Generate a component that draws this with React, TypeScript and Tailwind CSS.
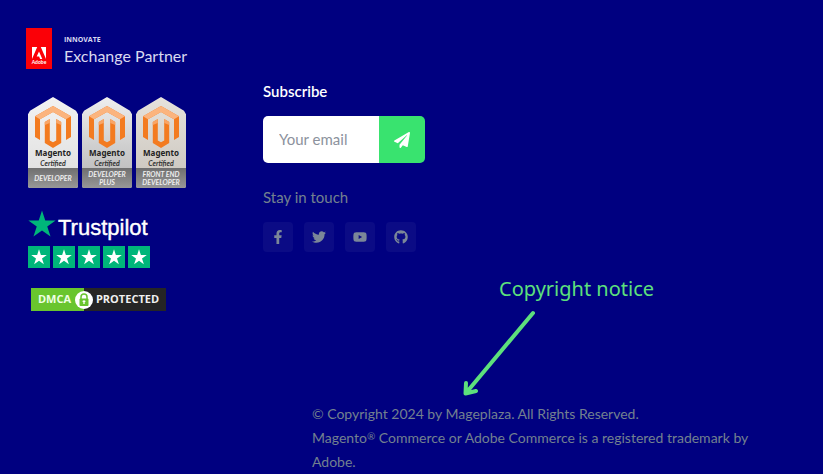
import { FaFacebookF, FaGithub, FaPaperPlane, FaTwitter, FaYoutube } from "react-icons/fa";

const certifications = [
  { lines: ["DEVELOPER"], plate: "bg-linear-to-b from-[#f2f2f2] to-[#dedede]" },
  { lines: ["DEVELOPER", "PLUS"], plate: "bg-linear-to-b from-[#eeeeee] to-[#b5b5b5]" },
  { lines: ["FRONT END", "DEVELOPER"], plate: "bg-linear-to-b from-[#e6e2dc] to-[#c9c4bc]" },
];

const socials = [
  { label: "Facebook", Icon: FaFacebookF },
  { label: "Twitter", Icon: FaTwitter },
  { label: "YouTube", Icon: FaYoutube },
  { label: "GitHub", Icon: FaGithub },
];

function Star({ className }: { className: string }) {
  return (
    <svg viewBox="0 0 24 24" className={className} aria-hidden="true">
      <path d="M12 0.5 14.8 9H23.7L16.5 14.2 19.3 22.8 12 17.5 4.7 22.8 7.5 14.2 0.3 9H9.2Z" fill="currentColor" />
    </svg>
  );
}

function AdobePartner() {
  return (
    <div className="flex items-start gap-3">
      <div className="flex h-[41px] w-[26px] flex-col items-center justify-end bg-[#fb0007] pb-1">
        <svg viewBox="0 0 14 12" className="h-3 w-3.5" aria-hidden="true">
          <path d="M0 0H5.2L0 12ZM8.8 0H14V12ZM7 4.4 10.3 12H8.1L7.1 9.6H4.7Z" fill="#fff" />
        </svg>
        <span className="text-[5px] leading-[6px] font-bold text-white">Adobe</span>
      </div>
      <div className="pt-2 text-[#d9d9f0]">
        <p className="font-['Open_Sans',sans-serif] text-[7px] leading-2 font-bold">INNOVATE</p>
        <p className="text-base leading-6 whitespace-nowrap">Exchange Partner</p>
      </div>
    </div>
  );
}

function MagentoLogo() {
  return (
    <svg viewBox="0 0 36 42" className="h-[42px] w-9" aria-hidden="true">
      <path d="M18 0 36 10.3V31L31 34V13.3L18 6 5 13.3V34L0 31V10.3Z" fill="#f37b20" />
      <path d="M18 0 36 10.3 31 13.3 18 6 5 13.3 0 10.3Z" fill="#fbb47e" />
      <path d="M9.8 16 14.8 13V34.500L18 36.300 21.200 34.500V13L26.200 16V37L18 42 9.800 37Z" fill="#f37b20" />
      <path d="M9.8 16 14.8 13V17L9.8 19ZM21.2 13 26.2 16V19L21.2 17Z" fill="#f9a566" />
    </svg>
  );
}

function CertificationBadge({ lines, plate }: { lines: string[]; plate: string }) {
  return (
    <li
      className={`flex h-[91px] w-[50px] flex-col items-center overflow-hidden rounded-b-xs pt-[9px] [clip-path:polygon(44%_2%,50%_0,56%_2%,96%_15%,100%_19%,100%_100%,0_100%,0_19%,4%_15%)] ${plate}`}
    >
      <MagentoLogo />
      <span className="font-['Noto_Sans',sans-serif] text-[8px] leading-[10px] font-bold text-[#222222]">Magento</span>
      <span className="text-[7px] leading-[10px] font-bold text-[#333333] italic">Certified</span>
      <span className="mt-auto flex h-5 w-full flex-col justify-center bg-linear-to-b from-[#6f6f6f] to-[#989898] text-center text-[7px] leading-2 font-bold whitespace-nowrap text-[#eeeeee] italic">
        {lines.map((line) => (
          <span key={line}>{line}</span>
        ))}
      </span>
    </li>
  );
}

function Trustpilot() {
  return (
    <div className="pt-0.5">
      <div className="flex items-start gap-0.5">
        <Star className="h-7 w-7 text-[#00b67a]" />
        <span className="pt-1.5 font-['Liberation_Sans',Arial,sans-serif] text-[22px] leading-6 text-white [-webkit-text-stroke:0.4px_white]">
          Trustpilot
        </span>
      </div>
      <div className="mt-1.5 flex w-[122px] justify-between" role="img" aria-label="5 stars">
        {[1, 2, 3, 4, 5].map((n) => (
          <span key={n} className="flex h-[22px] w-[22px] items-center justify-center bg-[#00b67a]">
            <Star className="h-4 w-4 text-white" />
          </span>
        ))}
      </div>
    </div>
  );
}

function DmcaBadge() {
  return (
    <a
      href="#dmca"
      className="ml-[3px] flex h-[23px] w-[135px] items-center bg-linear-to-r from-[#69c52e] from-39% to-[#252525] to-39% pr-1 font-['Open_Sans',sans-serif] text-[11px] font-bold text-[#f0f0f0]"
    >
      <span className="w-10 text-right text-[#efffe5]">DMCA</span>
      <svg viewBox="0 0 18 18" className="ml-1 h-[18px] w-[18px] shrink-0" aria-hidden="true">
        <circle cx="9" cy="9" r="9" fill="#fff" />
        <path d="M6 8V6A3 3 0 0 1 12 6V8" fill="none" stroke="#69c52e" strokeWidth="1.5" />
        <rect x="4.5" y="7.5" width="9" height="7.5" rx="1" fill="#69c52e" />
        <path d="M9 9.3V13M7.6 10.3H10.4" stroke="#fff" strokeWidth="1.3" />
      </svg>
      <span className="flex-1 text-center">PROTECTED</span>
    </a>
  );
}

function SubscribeForm() {
  return (
    <form onSubmit={(e) => e.preventDefault()}>
      <label htmlFor="email" className="block text-[15px] leading-6 font-semibold text-white">
        Subscribe
      </label>
      <div className="mt-[13px] flex h-[47px] w-[162px] overflow-hidden rounded-[5px]">
        <input
          id="email"
          type="email"
          placeholder="Your email"
          className="min-w-0 flex-1 bg-white px-4 text-[15px] text-gray-700 outline-none placeholder:text-[#8c929d]"
        />
        <button type="submit" aria-label="Subscribe" className="flex w-[46px] items-center justify-center bg-[#39e36f] text-white">
          <FaPaperPlane className="h-4 w-4" />
        </button>
      </div>
    </form>
  );
}

function CopyrightCallout() {
  return (
    <div className="absolute top-[277px] left-[463px] text-[#5de07c]">
      <p className="pl-9 font-['Noto_Sans',sans-serif] text-xl leading-6 whitespace-nowrap">Copyright notice</p>
      <svg viewBox="0 0 74 88" className="mt-2 h-[88px] w-[74px]" fill="none" aria-hidden="true">
        <path d="M70 4 3 84M3 74 2.5 84.5 13 82" stroke="currentColor" strokeWidth="4" strokeLinecap="round" strokeLinejoin="round" />
      </svg>
    </div>
  );
}

export default function App() {
  return (
    <footer className="relative min-h-screen bg-[#000080] font-[Lato,sans-serif] text-[#73808f]">
      <div className="flex pt-7 pl-[26px]">
        <div className="w-[237px] shrink-0">
          <AdobePartner />
          <div className="mt-7 flex flex-col gap-5 pl-0.5">
            <ul className="flex gap-1">
              {certifications.map((badge) => (
                <CertificationBadge key={badge.lines.join(" ")} {...badge} />
              ))}
            </ul>
            <Trustpilot />
            <DmcaBadge />
          </div>
        </div>

        <div className="pt-[51px]">
          <SubscribeForm />
          <p className="mt-[22px] text-[15px] leading-6">Stay in touch</p>
          <ul className="mt-[13px] flex gap-[11px]">
            {socials.map(({ label, Icon }) => (
              <li key={label}>
                <a href="#social" aria-label={label} className="flex h-[30px] w-[30px] items-center justify-center rounded-sm bg-[#0b0b85] text-[#7b8798]">
                  <Icon className="h-3.5 w-3.5" />
                </a>
              </li>
            ))}
          </ul>
        </div>
      </div>

      <CopyrightCallout />

      <div className="mt-[91px] pr-16 pl-[312px] text-sm leading-6">
        <p>© Copyright 2024 by Mageplaza. All Rights Reserved.</p>
        <p>
          Magento<span className="align-[3px] text-[10px] leading-none">®</span> Commerce or Adobe Commerce is a registered trademark by Adobe.
        </p>
      </div>
    </footer>
  );
}
